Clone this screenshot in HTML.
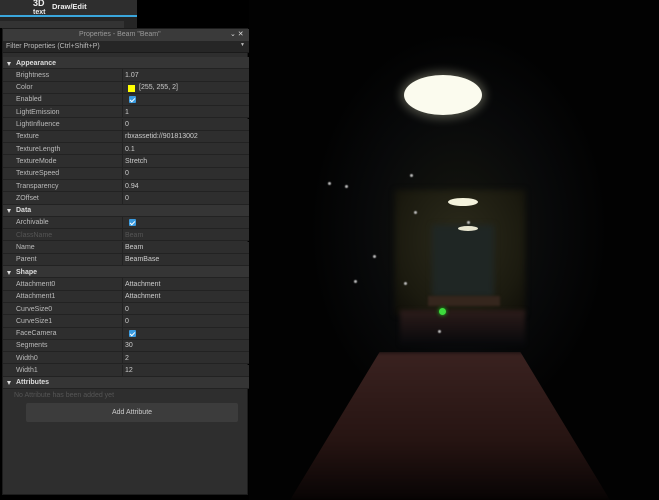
<!DOCTYPE html>
<html><head><style>
*{margin:0;padding:0;box-sizing:border-box}
body{width:659px;height:500px;background:#000;position:relative;overflow:hidden;font-family:"Liberation Sans",sans-serif;font-size:7px;color:#ccc}
.abs{position:absolute;white-space:nowrap}
.row{position:absolute;left:0;width:246px;height:12.3px;border-bottom:1px solid #222;background:#2e2e2e}
.row .k{position:absolute;left:13px;top:2.5px;color:#bbb}
.row .v{position:absolute;left:122px;top:2.5px;color:#ccc}
.row .sep{position:absolute;left:119px;top:0;width:1px;height:100%;background:#222}
.hdr{position:absolute;left:0;width:246px;height:12.3px;background:#353535;border-bottom:1px solid #222;font-weight:bold;color:#ddd}
.hdr span{position:absolute;left:13px;top:2.5px}
.hdr i{position:absolute;left:4px;top:4.5px;width:0;height:0;border-left:2.5px solid transparent;border-right:2.5px solid transparent;border-top:4px solid #ddd}
.cb{position:absolute;left:126px;top:2.5px;width:7px;height:7px;background:#3a9be0;border-radius:1px}
.cb:after{content:"";position:absolute;left:2px;top:0.5px;width:2px;height:4px;border:solid #fff;border-width:0 1px 1px 0;transform:rotate(45deg)}
.d{position:absolute;width:3px;height:3px;border-radius:50%;background:#bbb;filter:blur(.5px)}
</style></head><body>
<!-- scene -->
<div class="abs" style="left:249px;top:0;width:410px;height:500px;background:radial-gradient(ellipse 150px 200px at 210px 230px,#15160f 0%,#08090a 60%,#020202 100%)"></div>
<div class="abs" style="left:395px;top:190px;width:130px;height:125px;background:radial-gradient(ellipse at 50% 40%,#2c2b1c,#1b1a0f 70%,#0f0e08);filter:blur(3px)"></div>
<div class="abs" style="left:432px;top:225px;width:62px;height:72px;background:#1f2624;filter:blur(3px)"></div>
<div class="abs" style="left:428px;top:296px;width:72px;height:10px;background:#35261d;filter:blur(1px)"></div>
<div class="abs" style="left:400px;top:310px;width:125px;height:35px;background:linear-gradient(#2c1c1a,#07080b);filter:blur(2px)"></div>
<div class="abs" style="left:290px;top:352px;width:320px;height:148px;background:linear-gradient(#3a2220,#261412 60%,#080404);clip-path:polygon(28% 0,72% 0,100% 100%,0 100%);filter:blur(2px)"></div>
<div class="abs" style="left:404px;top:75px;width:78px;height:40px;border-radius:50%;background:#fbfbee;box-shadow:0 0 10px 3px rgba(255,255,220,.3)"></div>
<div class="abs" style="left:448px;top:198px;width:30px;height:8px;border-radius:50%;background:#f4f2dc"></div>
<div class="abs" style="left:458px;top:226px;width:20px;height:5px;border-radius:50%;background:#e8e6d0"></div>
<div class="abs" style="left:439px;top:308px;width:7px;height:7px;border-radius:50%;background:#3ddc3d;box-shadow:0 0 4px #2c2"></div>
<div class="d" style="left:328px;top:182px"></div><div class="d" style="left:345px;top:185px"></div><div class="d" style="left:410px;top:174px"></div><div class="d" style="left:414px;top:211px"></div><div class="d" style="left:373px;top:255px"></div><div class="d" style="left:354px;top:280px"></div><div class="d" style="left:404px;top:282px"></div><div class="d" style="left:438px;top:330px"></div><div class="d" style="left:467px;top:221px"></div>
<!-- top toolbar -->
<div class="abs" style="left:0;top:0;width:137px;height:15px;background:#2e2e2e"></div>
<div class="abs" style="left:0;top:15px;width:137px;height:2px;background:#3aa6dc"></div>
<div class="abs" style="left:0;top:17px;width:137px;height:11px;background:#252525"></div>
<div class="abs" style="left:0;top:21px;width:124px;height:7px;background:#333"></div>
<div class="abs" style="left:33px;top:-1px;font-weight:bold;font-size:9px;color:#eee;line-height:8px">3D<br><span style="font-size:7px">text</span></div>
<div class="abs" style="left:52px;top:2px;font-weight:bold;font-size:7.5px;color:#eee">Draw/Edit</div>
<!-- panel -->
<div class="abs" style="left:2px;top:28px;width:246px;height:467px;background:#2e2e2e;border:1px solid #1c1c1c">
 <div class="abs" style="left:0;top:0;width:246px;height:12px;background:#3a3a3a;color:#999"><span class="abs" style="left:76px;top:2px">Properties - Beam "Beam"</span><span class="abs" style="left:227px;top:1px;color:#ddd">⌄ ✕</span></div>
 <div class="abs" style="left:0;top:12px;width:246px;height:12px;background:#262626;border-bottom:1px solid #1a1a1a;color:#bbb"><span class="abs" style="left:3px;top:2px">Filter Properties (Ctrl+Shift+P)</span><span class="abs" style="left:237px;top:1px;font-size:5px">▼</span></div>
 <div style="position:absolute;left:0;top:28px">
 <div class="hdr" style="top:0"><i></i><span>Appearance</span></div>
 <div class="row" style="top:12.3px"><span class="k">Brightness</span><span class="sep"></span><span class="v">1.07</span></div>
 <div class="row" style="top:24.6px"><span class="k">Color</span><span class="sep"></span><span class="abs" style="left:125px;top:3px;width:7px;height:7px;background:#ffff02"></span><span class="v" style="left:136px">[255, 255, 2]</span></div>
 <div class="row" style="top:36.9px"><span class="k">Enabled</span><span class="sep"></span><span class="cb"></span></div>
 <div class="row" style="top:49.2px"><span class="k">LightEmission</span><span class="sep"></span><span class="v">1</span></div>
 <div class="row" style="top:61.5px"><span class="k">LightInfluence</span><span class="sep"></span><span class="v">0</span></div>
 <div class="row" style="top:73.8px"><span class="k">Texture</span><span class="sep"></span><span class="v">rbxassetid://901813002</span></div>
 <div class="row" style="top:86.1px"><span class="k">TextureLength</span><span class="sep"></span><span class="v">0.1</span></div>
 <div class="row" style="top:98.4px"><span class="k">TextureMode</span><span class="sep"></span><span class="v">Stretch</span></div>
 <div class="row" style="top:110.7px"><span class="k">TextureSpeed</span><span class="sep"></span><span class="v">0</span></div>
 <div class="row" style="top:123px"><span class="k">Transparency</span><span class="sep"></span><span class="v">0.94</span></div>
 <div class="row" style="top:135.3px"><span class="k">ZOffset</span><span class="sep"></span><span class="v">0</span></div>
 <div class="hdr" style="top:147.6px"><i></i><span>Data</span></div>
 <div class="row" style="top:159.9px"><span class="k">Archivable</span><span class="sep"></span><span class="cb"></span></div>
 <div class="row" style="top:172.2px"><span class="k" style="color:#555">ClassName</span><span class="sep"></span><span class="v" style="color:#555">Beam</span></div>
 <div class="row" style="top:184.5px"><span class="k">Name</span><span class="sep"></span><span class="v">Beam</span></div>
 <div class="row" style="top:196.8px"><span class="k">Parent</span><span class="sep"></span><span class="v">BeamBase</span></div>
 <div class="hdr" style="top:209.1px"><i></i><span>Shape</span></div>
 <div class="row" style="top:221.4px"><span class="k">Attachment0</span><span class="sep"></span><span class="v">Attachment</span></div>
 <div class="row" style="top:233.7px"><span class="k">Attachment1</span><span class="sep"></span><span class="v">Attachment</span></div>
 <div class="row" style="top:246px"><span class="k">CurveSize0</span><span class="sep"></span><span class="v">0</span></div>
 <div class="row" style="top:258.3px"><span class="k">CurveSize1</span><span class="sep"></span><span class="v">0</span></div>
 <div class="row" style="top:270.6px"><span class="k">FaceCamera</span><span class="sep"></span><span class="cb"></span></div>
 <div class="row" style="top:282.9px"><span class="k">Segments</span><span class="sep"></span><span class="v">30</span></div>
 <div class="row" style="top:295.2px"><span class="k">Width0</span><span class="sep"></span><span class="v">2</span></div>
 <div class="row" style="top:307.5px"><span class="k">Width1</span><span class="sep"></span><span class="v">12</span></div>
 <div class="hdr" style="top:319.8px"><i></i><span>Attributes</span></div>
 <div class="abs" style="left:11px;top:335px;color:#555">No Attribute has been added yet</div>
 <div class="abs" style="left:23px;top:346px;width:212px;height:19px;background:#3c3c3c;border-radius:2px;color:#ccc;text-align:center;line-height:19px">Add Attribute</div>
 </div>
</div>
</body></html>
